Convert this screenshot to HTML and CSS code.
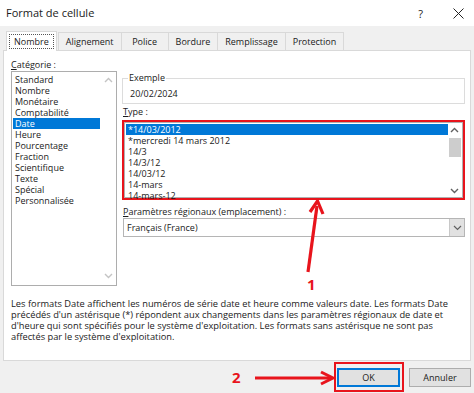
FILE: index.html
```html
<!DOCTYPE html>
<html lang="fr">
<head>
  <meta charset="UTF-8" />
  <meta name="viewport" content="width=device-width, initial-scale=1" />
  <title>Format de cellule</title>
  <link rel="stylesheet" href="styles.css">
</head>
<body>
  <div class="dialog">
    <header class="titlebar">
      <span class="title">Format de cellule</span>
      <span class="help">?</span>
      <span class="close">
        <svg width="11" height="11" viewBox="0 0 11 11"><path d="M0.5 0.5 L10.5 10.5 M10.5 0.5 L0.5 10.5" stroke="#222" stroke-width="1" fill="none"/></svg>
      </span>
    </header>

    <nav class="tabs">
      <div class="tab active"><span class="focus">Nombre</span></div>
      <div class="tab">Alignement</div>
      <div class="tab">Police</div>
      <div class="tab">Bordure</div>
      <div class="tab">Remplissage</div>
      <div class="tab">Protection</div>
    </nav>

    <section class="panel">
      <div class="panel-grid">
        <div class="col-left">
          <div class="label"><u>C</u>atégorie :</div>
          <div class="listbox category">
            <ul class="items">
              <li>Standard</li>
              <li>Nombre</li>
              <li>Monétaire</li>
              <li>Comptabilité</li>
              <li class="selected">Date</li>
              <li>Heure</li>
              <li>Pourcentage</li>
              <li>Fraction</li>
              <li>Scientifique</li>
              <li>Texte</li>
              <li>Spécial</li>
              <li>Personnalisée</li>
            </ul>
            <div class="scroll disabled">
              <svg width="9" height="6" viewBox="0 0 9 6"><path d="M1 5 L4.5 1.5 L8 5" stroke="#c4c4c4" stroke-width="1.4" fill="none"/></svg>
              <svg width="9" height="6" viewBox="0 0 9 6"><path d="M1 1 L4.5 4.5 L8 1" stroke="#c4c4c4" stroke-width="1.4" fill="none"/></svg>
            </div>
          </div>
        </div>

        <div class="col-right">
          <fieldset class="sample">
            <legend>Exemple</legend>
            <div class="sample-value">20/02/2024</div>
          </fieldset>

          <div class="label"><u>T</u>ype :</div>
          <div class="mark-box">
            <div class="listbox type">
              <ul class="items">
                <li class="selected">*14/03/2012</li>
                <li>*mercredi 14 mars 2012</li>
                <li>14/3</li>
                <li>14/3/12</li>
                <li>14/03/12</li>
                <li>14-mars</li>
                <li>14-mars-12</li>
              </ul>
              <div class="scroll">
                <svg width="9" height="6" viewBox="0 0 9 6"><path d="M1 5 L4.5 1.5 L8 5" stroke="#606060" stroke-width="1.4" fill="none"/></svg>
                <div class="thumb"></div>
                <svg class="down" width="9" height="6" viewBox="0 0 9 6"><path d="M1 1 L4.5 4.5 L8 1" stroke="#606060" stroke-width="1.4" fill="none"/></svg>
              </div>
            </div>
          </div>

          <div class="label region"><u>P</u>aramètres régionaux (emplacement) :</div>
          <div class="combo">
            <span class="combo-text">Français (France)</span>
            <span class="combo-btn">
              <svg width="9" height="6" viewBox="0 0 9 6"><path d="M1 1 L4.5 4.5 L8 1" stroke="#606060" stroke-width="1.2" fill="none"/></svg>
            </span>
          </div>
        </div>
      </div>

      <p class="desc">Les formats Date affichent les numéros de série date et heure comme valeurs date. Les formats Date précédés d'un astérisque (*) répondent aux changements dans les paramètres régionaux de date et d'heure qui sont spécifiés pour le système d'exploitation. Les formats sans astérisque ne sont pas affectés par le système d'exploitation.</p>
    </section>

    <footer class="buttons">
      <div class="mark-btn"><button class="btn default">OK</button></div>
      <button class="btn cancel">Annuler</button>
    </footer>

    <!-- annotations -->
    <svg class="arrow arrow-1" width="30" height="80" viewBox="0 0 30 80">
      <path d="M10 74 L19 8" stroke="#e8141c" stroke-width="3.2" fill="none"/>
      <path d="M12 14 L19.5 3 L25 16" stroke="#e8141c" stroke-width="3.2" fill="none" stroke-linejoin="miter"/>
    </svg>
    <span class="step step-1">1</span>

    <svg class="arrow arrow-2" width="82" height="16" viewBox="0 0 82 16">
      <path d="M0 8 L77 8" stroke="#e8141c" stroke-width="3" fill="none"/>
      <path d="M66 2 L78 8 L66 14" stroke="#e8141c" stroke-width="3" fill="none"/>
    </svg>
    <span class="step step-2">2</span>
  </div>
</body>
</html>
```

FILE: styles.css
```css
* {
  box-sizing: border-box;
}
body {
  margin: 0;
  background: #f0f0f0;
  font-family: 'Open Sans', 'Noto Sans', sans-serif;
  font-size: 9px;
  color: #1a1a1a;
}
.dialog {
  position: relative;
  width: 474px;
  height: 393px;
  overflow: hidden;
}

.titlebar {
  height: 26px;
  background: #fff;
  display: flex;
  align-items: center;
  padding: 0 10px 0 6px;
}
.title {
  font-size: 11px;
  flex: 1;
  padding-bottom: 2px;
}
.help {
  font-size: 11px;
  margin-right: 30px;
}
.close {
  display: flex;
}

.tabs {
  display: flex;
  align-items: flex-end;
  height: 24px;
  padding-left: 6px;
  position: relative;
  z-index: 1;
}
.tab {
  height: 18px;
  min-width: 48px;
  padding: 0 7px;
  line-height: 17px;
  text-align: center;
  border: 1px solid #d9d9d9;
  border-bottom: none;
  margin-left: -1px;
  background: #f0f0f0;
}
.tab.active {
  height: 20px;
  padding: 2px 2px 0;
  background: #fff;
  margin-bottom: -1px;
  margin-left: 0;
  margin-right: 2px;
}
.tab .focus {
  display: block;
  border: 1px dotted #555;
  line-height: 13px;
  padding: 0 4px;
}

.panel {
  margin: 0 3px 0 3px;
  height: 311px;
  background: #fff;
  border: 1px solid #d9d9d9;
}
.panel-grid {
  display: grid;
  grid-template-columns: 106px 1fr;
  gap: 5px;
  padding: 8px 5px 0 7px;
}

.label {
  line-height: 12px;
  height: 12px;
}
.label u {
  text-decoration-thickness: 1px;
}

.listbox {
  display: flex;
  border: 1px solid #adadad;
  background: #fff;
}
.items {
  list-style: none;
  margin: 0;
  padding: 2px 0 0 1px;
  flex: 1;
}
.items li {
  height: 11px;
  line-height: 11px;
  padding-left: 2px;
  white-space: nowrap;
}
.items li.selected {
  background: #0078d7;
  color: #fff;
}
.category {
  height: 215px;
}
.scroll {
  width: 14px;
  display: flex;
  flex-direction: column;
  align-items: center;
  justify-content: space-between;
  padding: 4px 0 3px;
}
.scroll.disabled {
  width: 16px;
  padding: 5px 0 6px;
}

.col-right {
  padding-top: 15px;
}
.sample {
  margin: 0;
  height: 31px;
  border: 1px solid #dcdcdc;
  padding: 0 0 0 7px;
  margin-top: -1px;
}
.sample legend {
  padding: 0 1px;
  margin-left: -2px;
  line-height: 10px;
}
.sample-value {
  line-height: 12px;
  padding-top: 5px;
}

.col-right .label {
  margin-top: 2px;
  margin-left: 1px;
}
.col-right .label.region {
  margin-top: 6px;
}
.mark-box {
  border: 2px solid #e8141c;
  height: 80px;
  margin-top: 2px;
}
.type {
  height: 76px;
  border-color: #b0b0b0;
}
.type .items {
  padding-top: 1px;
}
.type .scroll {
  width: 13px;
  justify-content: flex-start;
  padding: 4px 0 3px;
  margin-right: 1px;
}
.type .thumb {
  width: 12px;
  height: 19px;
  background: #cdcdcd;
  margin-top: 5px;
}
.type .down {
  margin-top: auto;
}

.combo {
  height: 19px;
  border: 1px solid #b5b5b5;
  display: flex;
  align-items: center;
  margin-left: 1px;
}
.combo-text {
  flex: 1;
  padding-left: 3px;
}
.combo-btn {
  width: 15px;
  height: 17px;
  background: #e1e1e1;
  border-left: 1px solid #c8c8c8;
  display: flex;
  align-items: center;
  justify-content: center;
}

.desc {
  margin: 12px 0 0 7px;
  width: 452px;
  font-size: 9.3px;
  line-height: 11px;
}

.buttons {
  display: flex;
  justify-content: flex-end;
  align-items: flex-start;
  padding: 1px 3px 0 0;
  gap: 5px;
}
.mark-btn {
  border: 2px solid #e8141c;
  padding: 4px 2px 3px 1px;
}
.btn {
  font-family: inherit;
  font-size: 9px;
  color: #1a1a1a;
  width: 63px;
  height: 19px;
  border: 1px solid #adadad;
  background: #e1e1e1;
  padding: 0;
  margin: 0;
}
.btn.default {
  border: 2px solid #0078d7;
}
.cancel {
  width: 62px;
  margin-top: 6px;
}

.arrow {
  position: absolute;
}
.arrow-1 {
  left: 298px;
  top: 198px;
}
.arrow-2 {
  left: 255px;
  top: 370px;
}
.step {
  position: absolute;
  color: #e8141c;
  font-weight: 700;
  font-size: 15px;
  line-height: 15px;
}
.step-1 {
  left: 307px;
  top: 277px;
}
.step-2 {
  left: 232px;
  top: 370px;
}
```
